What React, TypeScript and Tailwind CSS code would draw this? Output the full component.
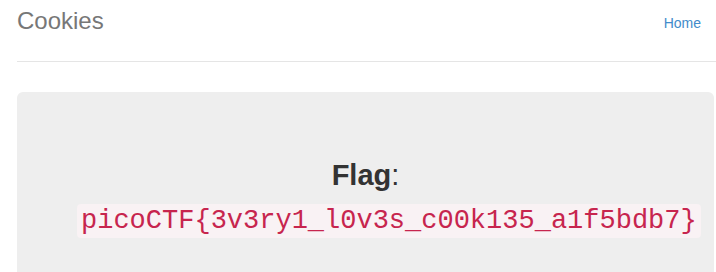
export default function App() {
  return (
    <div className="h-[272px] overflow-hidden bg-white pl-[17px] font-['Liberation_Sans',Arial,sans-serif] text-[14px] text-[#333]">
      {/* Header */}
      <div className="flex items-start justify-between border-b border-[#e5e5e5] pt-px pb-5">
        <h3 className="m-0 text-[24px] leading-[40px] text-[#777]">Cookies</h3>
        <ul className="flex">
          <li>
            <a href="#" className="block px-[15px] pt-[12px] pb-[8px] leading-5 text-[#428bca]">
              Home
            </a>
          </li>
        </ul>
      </div>

      {/* Jumbotron */}
      <div className="mt-[30px] mr-[2px] h-[200px] rounded-[6px] bg-[#eee] px-[60px] pt-[62px] text-center">
        <p className="text-[29px] leading-[43px]">
          <b>Flag</b>:{" "}
          <code className="rounded-[4px] bg-[#f9f2f4] px-1 py-[2px] font-['Liberation_Mono','Courier_New',monospace] text-[27px] text-[#c7254e]">
            picoCTF{"{"}3v3ry1_l0v3s_c00k135_a1f5bdb7{"}"}
          </code>
        </p>
      </div>
    </div>
  );
}
